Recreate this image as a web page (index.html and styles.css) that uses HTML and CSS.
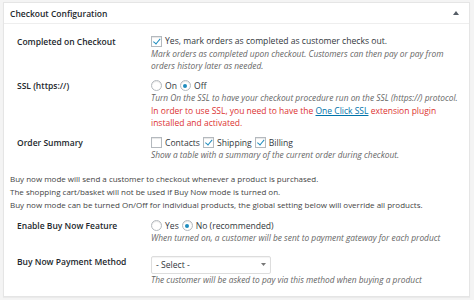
FILE: index.html
```html
<!DOCTYPE html>
<html>
<head>
<meta charset="utf-8">
<link rel="stylesheet" href="styles.css">
</head>
<body>
<div class="postbox">
  <div class="hndle">
    <span class="title">Checkout Configuration</span>
    <svg class="toggle" width="6" height="4" viewBox="0 0 6 4"><path d="M0 4 L3 0 L6 4 Z" fill="#555d66"/></svg>
  </div>
  <div class="inside">
    <div class="row">
      <div class="label">Completed on Checkout</div>
      <div class="field">
        <div class="line"><span class="cb checked"></span><span class="opt">Yes, mark orders as completed as customer checks out.</span></div>
        <p class="desc">Mark orders as completed upon checkout. Customers can then pay or pay from orders history later as needed.</p>
      </div>
    </div>
    <div class="row">
      <div class="label">SSL (https://)</div>
      <div class="field">
        <div class="line"><span class="rb"></span><span class="opt">On</span><span class="rb on"></span><span class="opt">Off</span></div>
        <p class="desc">Turn On the SSL to have your checkout procedure run on the SSL (https://) protocol.</p>
        <p class="warn">In order to use SSL, you need to have the <a class="link">One Click SSL</a> extension plugin<br>installed and activated.</p>
      </div>
    </div>
    <div class="row">
      <div class="label">Order Summary</div>
      <div class="field">
        <div class="line"><span class="cb"></span><span class="opt">Contacts</span><span class="cb checked"></span><span class="opt">Shipping</span><span class="cb checked"></span><span class="opt">Billing</span></div>
        <p class="desc">Show a table with a summary of the current order during checkout.</p>
      </div>
    </div>
    <div class="notes">
      <p>Buy now mode will send a customer to checkout whenever a product is purchased.</p>
      <p>The shopping cart/basket will not be used if Buy Now mode is turned on.</p>
      <p>Buy now mode can be turned On/Off for individual products, the global setting below will override all products.</p>
    </div>
    <div class="row">
      <div class="label">Enable Buy Now Feature</div>
      <div class="field">
        <div class="line"><span class="rb"></span><span class="opt">Yes</span><span class="rb on"></span><span class="opt">No (recommended)</span></div>
        <p class="desc">When turned on, a customer will be sent to payment gateway for each product</p>
      </div>
    </div>
    <div class="row last">
      <div class="label label-select">Buy Now Payment Method</div>
      <div class="field">
        <div class="select"><span>- Select -</span><svg width="5" height="3" viewBox="0 0 5 3"><path d="M0 0 L5 0 L2.5 3 Z" fill="#777"/></svg></div>
        <p class="desc">The customer will be asked to pay via this method when buying a product</p>
      </div>
    </div>
  </div>
</div>
</body>
</html>
```

FILE: styles.css
```css
html, body {
  margin: 0;
  padding: 0;
  background: #f4f4f4;
}
body {
  font-family: "Open Sans", "Liberation Sans", sans-serif;
  color: #444;
  width: 474px;
  height: 300px;
  overflow: hidden;
}
.postbox {
  margin: 2px 4px 0 3px;
  background: #fff;
  border: 1px solid #e5e5e5;
  box-shadow: 0 1px 1px rgba(0,0,0,0.04);
  height: 295px;
  box-sizing: border-box;
}
.hndle {
  display: flex;
  align-items: center;
  justify-content: space-between;
  height: 20px;
  padding: 0 10px 0 6px;
  border-bottom: 1px solid #eee;
}
.title {
  font-size: 8.5px;
  font-weight: 600;
  color: #23282d;
}
.toggle {
  display: block;
}
.inside {
  padding: 7px 6px 0 6px;
}
.row {
  display: flex;
  padding: 3.75px 0;
}
.label {
  width: 134px;
  padding-left: 7px;
  flex: none;
  font-size: 8.5px;
  font-weight: 600;
  color: #23282d;
  line-height: 13px;
}
.label-select {
  line-height: 12px;
}
.field {
  flex: 1;
  font-size: 8.6px;
}
.line {
  display: flex;
  align-items: center;
  height: 13px;
  color: #32373c;
}
.opt {
  margin-right: 3px;
}
.cb, .rb {
  flex: none;
  width: 9px;
  height: 9px;
  border: 1px solid #b4b9be;
  background: #fff;
  box-shadow: inset 0 1px 1px rgba(0,0,0,0.1);
  margin-right: 3px;
  position: relative;
  box-sizing: content-box;
}
.rb {
  border-radius: 50%;
}
.cb.checked::after {
  content: "";
  position: absolute;
  left: 3px;
  top: 0px;
  width: 2.5px;
  height: 5.5px;
  border: solid #1e8cbe;
  border-width: 0 1.6px 1.6px 0;
  transform: rotate(40deg);
}
.rb.on::after {
  content: "";
  position: absolute;
  left: 2.5px;
  top: 2.5px;
  width: 4px;
  height: 4px;
  border-radius: 50%;
  background: #1e8cbe;
}
.desc {
  margin: 0;
  font-size: 8.4px;
  font-style: italic;
  color: #666;
  line-height: 12px;
}
.warn {
  margin: 0;
  padding-top: 0.5px;
  font-size: 8.5px;
  color: #dc3232;
  line-height: 12px;
}
.link {
  color: #0073aa;
  text-decoration: underline;
}
.notes {
  padding: 7.25px 0 4.25px 0;
}
.notes p {
  margin: 0;
  font-size: 8px;
  line-height: 13px;
  color: #444;
}
.row.last {
  padding-top: 7.5px;
}
.select {
  display: flex;
  align-items: center;
  justify-content: space-between;
  width: 120px;
  height: 18px;
  box-sizing: border-box;
  border: 1px solid #ddd;
  border-radius: 2px;
  box-shadow: inset 0 1px 1px rgba(0,0,0,0.05);
  padding: 0 4px 0 4px;
  font-size: 8.6px;
  color: #32373c;
}
.select svg {
  display: block;
}
```
